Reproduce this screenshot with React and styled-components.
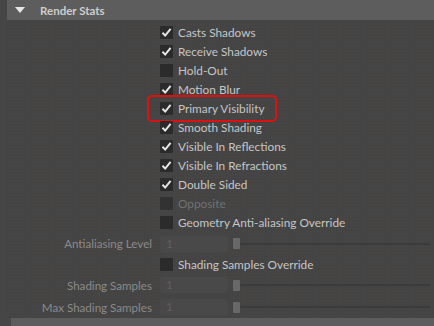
import React from "react";
import styled, { createGlobalStyle } from "styled-components";

const GlobalStyle = createGlobalStyle`
  html, body {
    margin: 0;
    padding: 0;
    background: #454545;
    overflow: hidden;
  }
`;

const Page = styled.div`
  display: flex;
  width: 434px;
  height: 326px;
  background: #474747;
  font-family: Lato, "Open Sans", sans-serif;
  font-size: 11.8px;
  color: #c6c6c6;
  overflow: hidden;
`;

const Gutter = styled.div`
  width: 7px;
  flex-shrink: 0;
  background: #464646;
`;

const Section = styled.div`
  display: flex;
  flex-direction: column;
  flex: 1;
`;

const Header = styled.div`
  display: flex;
  align-items: center;
  height: 20px;
  flex-shrink: 0;
  background: #5d5d5d;
  font-weight: 700;
  font-size: 11.5px;
  color: #cdcdcd;
  gap: 15px;
  padding-left: 8px;
`;

const Arrow = styled.div`
  width: 0;
  height: 0;
  border-left: 5px solid transparent;
  border-right: 5px solid transparent;
  border-top: 6px solid #e6e6e6;
`;

const Body = styled.div`
  display: flex;
  flex-direction: column;
  padding: 3px 0 0 3px;
  background-color: #444444;
  background-image: radial-gradient(rgba(120, 90, 70, 0.18) 0.6px, transparent 0.8px);
  background-size: 3px 3px;
`;

const Row = styled.div`
  position: relative;
  display: grid;
  grid-template-columns: 142px 1fr;
  column-gap: 8px;
  align-items: center;
  height: ${(p) => p.$h || 19}px;
`;

const Label = styled.div`
  text-align: right;
  color: #8a8a8a;
  font-size: 11.6px;
  white-space: nowrap;
`;

const Control = styled.div`
  display: flex;
  align-items: center;
  gap: 5px;
  color: ${(p) => (p.$disabled ? "#727272" : "#c6c6c6")};
  white-space: nowrap;
`;

const Box = styled.div`
  width: 13px;
  height: 13px;
  border-radius: 1px;
  background: #2b2b2b;
  display: flex;
  align-items: center;
  justify-content: center;
  opacity: ${(p) => (p.$disabled ? 0.7 : 1)};
`;

const Highlight = styled.div`
  position: absolute;
  left: 137px;
  top: -4px;
  width: 130px;
  height: 27px;
  box-sizing: border-box;
  border: 2px solid #e01010;
  border-radius: 5px;
  pointer-events: none;
`;

const Field = styled.div`
  width: 68px;
  height: 16px;
  background: #494949;
  border-radius: 2px;
  color: #606060;
  padding-left: 6px;
  box-sizing: border-box;
  line-height: 16px;
  flex-shrink: 0;
`;

const Slider = styled.div`
  display: flex;
  align-items: center;
  flex: 1;
  padding-right: 4px;
`;

const Handle = styled.div`
  width: 7px;
  height: 11px;
  background: #686868;
  border-radius: 1px;
  flex-shrink: 0;
`;

const Track = styled.div`
  flex: 1;
  height: 2px;
  background: #3b3b3b;
`;

const NextHeader = styled.div`
  height: 10px;
  margin-left: 4px;
  background: #5d5d5d;
`;

const Check = () => (
  <svg width="11" height="11" viewBox="0 0 11 11">
    <path d="M1.5 5.8 L4.2 8.6 L9.6 1.8" fill="none" stroke="#e6e6e6" strokeWidth="2" />
  </svg>
);

const CheckRow = ({ label, checked, disabled, highlight, h }) => (
  <Row $h={h}>
    <div />
    <Control $disabled={disabled}>
      <Box $disabled={disabled}>{checked && <Check />}</Box>
      {label}
    </Control>
    {highlight && <Highlight />}
  </Row>
);

const SliderRow = ({ label, h }) => (
  <Row $h={h}>
    <Label>{label}</Label>
    <Control>
      <Field>1</Field>
      <Slider>
        <Handle />
        <Track />
      </Slider>
    </Control>
  </Row>
);

const checks = [
  { label: "Casts Shadows", checked: true },
  { label: "Receive Shadows", checked: true },
  { label: "Hold-Out", checked: false },
  { label: "Motion Blur", checked: true },
  { label: "Primary Visibility", checked: true, highlight: true },
  { label: "Smooth Shading", checked: true },
  { label: "Visible In Reflections", checked: true },
  { label: "Visible In Refractions", checked: true },
  { label: "Double Sided", checked: true },
  { label: "Opposite", checked: false, disabled: true },
  { label: "Geometry Anti-aliasing Override", checked: false },
];

export default function App() {
  return (
    <Page>
      <GlobalStyle />
      <Gutter />
      <Section>
        <Header>
          <Arrow />
          Render Stats
        </Header>
        <Body>
          {checks.map((c) => (
            <CheckRow key={c.label} {...c} />
          ))}
          <SliderRow label="Antialiasing Level" h={23} />
          <CheckRow label="Shading Samples Override" checked={false} />
          <SliderRow label="Shading Samples" h={22} />
          <SliderRow label="Max Shading Samples" h={22} />
        </Body>
        <NextHeader />
      </Section>
    </Page>
  );
}
